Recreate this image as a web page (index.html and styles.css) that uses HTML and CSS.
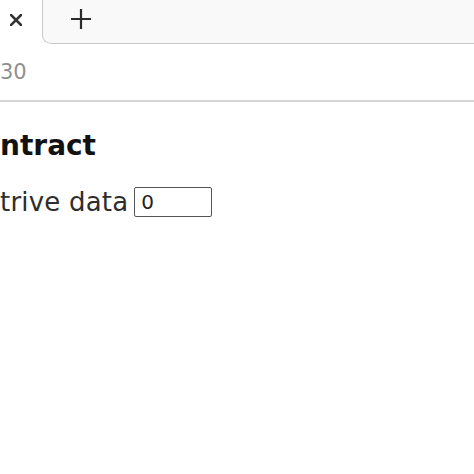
FILE: index.html
```html
<!DOCTYPE html>
<html>
<head>
<meta charset="utf-8">
<link rel="stylesheet" href="styles.css">
</head>
<body>
<div class="tabstrip">
  <div class="tab-active">
    <svg class="icon-close" width="12" height="12" viewBox="0 0 12 12"><path d="M1 1L11 11M11 1L1 11" stroke="#333" stroke-width="2.6" stroke-linecap="square"/></svg>
  </div>
  <div class="tab-rest">
    <svg class="icon-plus" width="20" height="20" viewBox="0 0 20 20"><path d="M10 0V20M0 10H20" stroke="#2b2b2b" stroke-width="2.2"/></svg>
  </div>
</div>
<div class="toolbar">
  <span class="url">30</span>
</div>
<main class="content">
  <h3 class="title">ntract</h3>
  <div class="row">
    <span class="label">trive data</span>
    <input class="field" type="text" value="0">
  </div>
</main>
</body>
</html>
```
FILE: styles.css
```css
html, body {
  margin: 0;
  padding: 0;
  background: #fff;
  font-family: "DejaVu Sans", sans-serif;
}
.tabstrip {
  display: flex;
  height: 44px;
  background: #fff;
}
.tab-active {
  width: 42px;
  display: flex;
  align-items: center;
  padding-left: 10px;
  box-sizing: border-box;
  padding-bottom: 4px;
}
.tab-rest {
  flex: 1;
  background: #f9f9f9;
  border-left: 1px solid #c9c9c9;
  border-bottom: 1px solid #c9c9c9;
  border-bottom-left-radius: 9px;
  display: flex;
  align-items: center;
  padding-left: 28px;
  padding-bottom: 5px;
}
.toolbar {
  height: 56px;
  border-bottom: 2px solid #d6d6d6;
  display: flex;
  align-items: center;
}
.url {
  font-size: 21px;
  color: #8f8f8f;
  margin-left: 0;
}
.content {
  padding-top: 27px;
}
.title {
  margin: 0;
  font-size: 28px;
  font-weight: bold;
  color: #121212;
  line-height: 34px;
}
.row {
  display: flex;
  align-items: center;
  margin-top: 24px;
}
.label {
  font-size: 26px;
  color: #2e2e2e;
  letter-spacing: 0.2px;
}
.field {
  margin-left: 6px;
  width: 78px;
  height: 30px;
  box-sizing: border-box;
  border: 1px solid #555;
  border-radius: 2px;
  font-family: "DejaVu Sans", sans-serif;
  font-size: 20px;
  padding: 0 6px;
  color: #222;
}
```
